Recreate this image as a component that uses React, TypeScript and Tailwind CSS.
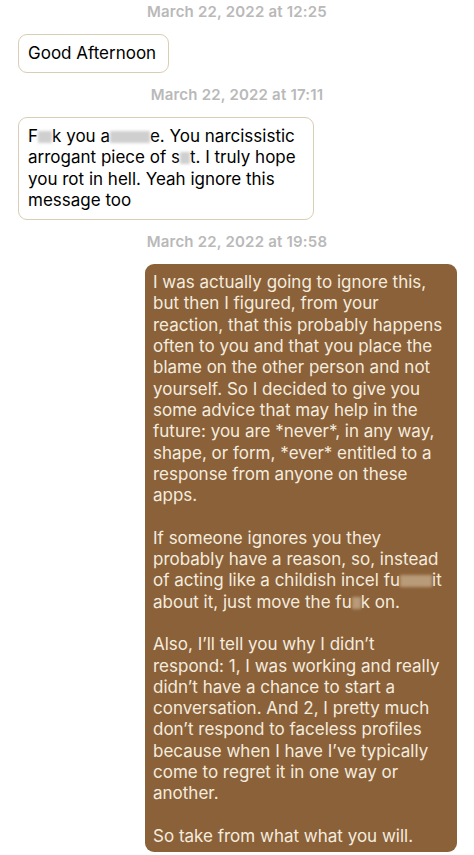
import React from "react";

const font = { fontFamily: "Inter, 'Liberation Sans', Arial, sans-serif" };

function Blur({ w, dark }: { w: number; dark?: boolean }) {
  return (
    <span
      className={
        "inline-block h-[12px] align-[-1px] blur-[1.5px] " +
        (dark ? "bg-[#b89b79]" : "bg-[#cfcfcf]")
      }
      style={{ width: w }}
    />
  );
}

function Stamp({ children }: { children: React.ReactNode }) {
  return (
    <div className="h-[22px] flex items-center justify-center text-[15px] font-semibold text-[#b9b9b9] tracking-[0.2px]">
      {children}
    </div>
  );
}

const p1 = [
  "I was actually going to ignore this,",
  "but then I figured, from your",
  "reaction, that this probably happens",
  "often to you and that you place the",
  "blame on the other person and not",
  "yourself. So I decided to give you",
  "some advice that may help in the",
  "future: you are *never*, in any way,",
  "shape, or form, *ever* entitled to a",
  "response from anyone on these",
  "apps.",
];

const p3 = [
  "Also, I\u2019ll tell you why I didn\u2019t",
  "respond: 1, I was working and really",
  "didn\u2019t have a chance to start a",
  "conversation. And 2, I pretty much",
  "don\u2019t respond to faceless profiles",
  "because when I have I\u2019ve typically",
  "come to regret it in one way or",
  "another.",
];

export default function App() {
  return (
    <div className="w-[474px] h-[855px] bg-white overflow-hidden pt-[1px]" style={font}>
      <Stamp>March 22, 2022 at 12:25</Stamp>
      <div className="mt-[11px] ml-[18px] inline-block border border-[#d8ceb4] rounded-[9px] pl-[9px] pr-[12px] py-[8px] text-[17px] leading-[21px] text-black">
        Good Afternoon
      </div>
      <div className="mt-[11px]">
        <Stamp>March 22, 2022 at 17:11</Stamp>
      </div>
      <div className="mt-[11px] ml-[18px] w-[296px] border border-[#d8ceb4] rounded-[9px] px-[9px] py-[8px] text-[17px] leading-[21.3px] text-black whitespace-nowrap">
        <div>
          F<Blur w={14} />k you a<Blur w={40} />e. You narcissistic
        </div>
        <div>
          arrogant piece of s<Blur w={10} />t. I truly hope
        </div>
        <div>you rot in hell. Yeah ignore this</div>
        <div>message too</div>
      </div>
      <div className="mt-[11px]">
        <Stamp>March 22, 2022 at 19:58</Stamp>
      </div>
      <div className="mt-[11px] ml-[145px] w-[312px] bg-[#8b6139] rounded-[9px] pl-[8px] pr-[6px] pt-[8px] pb-[5px] text-[17px] leading-[21.3px] text-[#f4ecdf] whitespace-nowrap">
        {p1.map((l) => (
          <div key={l}>{l}</div>
        ))}
        <div>&nbsp;</div>
        <div>If someone ignores you they</div>
        <div>probably have a reason, so, instead</div>
        <div>
          of acting like a childish incel fu<Blur w={32} dark />
          it
        </div>
        <div>
          about it, just move the fu<Blur w={9} dark />k on.
        </div>
        <div>&nbsp;</div>
        {p3.map((l) => (
          <div key={l}>{l}</div>
        ))}
        <div>&nbsp;</div>
        <div>So take from what what you will.</div>
      </div>
    </div>
  );
}
